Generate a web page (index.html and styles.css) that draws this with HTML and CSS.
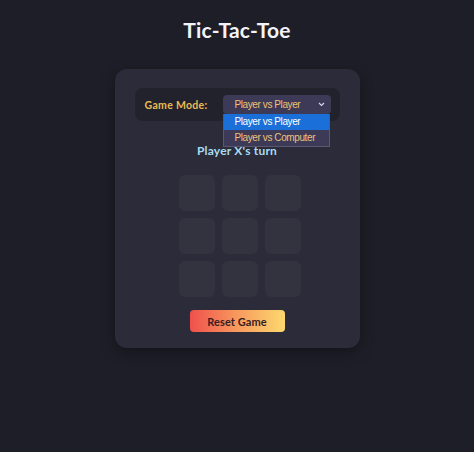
FILE: index.html
```html
<!DOCTYPE html>
<html lang="en">
<head>
<meta charset="utf-8">
<title>Tic-Tac-Toe</title>
<link rel="stylesheet" href="styles.css">
</head>
<body>
<h1 class="title">Tic-Tac-Toe</h1>
<main class="card">
  <div class="mode-box">
    <span class="mode-label">Game Mode:</span>
    <div class="select-wrap">
      <div class="select">
        <span>Player vs Player</span>
        <svg class="chev" width="7" height="5" viewBox="0 0 7 5"><polyline points="1,1 3.5,3.5 6,1" fill="none" stroke="#d8d4e8" stroke-width="1.2"/></svg>
      </div>
      <ul class="menu">
        <li class="opt opt-sel">Player vs Player</li>
        <li class="opt">Player vs Computer</li>
      </ul>
    </div>
  </div>
  <p class="status">Player X's turn</p>
  <div class="board">
    <div class="cell"></div><div class="cell"></div><div class="cell"></div>
    <div class="cell"></div><div class="cell"></div><div class="cell"></div>
    <div class="cell"></div><div class="cell"></div><div class="cell"></div>
  </div>
  <button class="reset">Reset Game</button>
</main>
</body>
</html>
```
FILE: styles.css
```css
html, body {
  margin: 0;
  padding: 0;
}
body {
  background: #1e1e28;
  font-family: Lato, "Open Sans", sans-serif;
  color: #fff;
  min-height: 452px;
}
.title {
  margin: 0;
  padding-top: 17px;
  font-size: 21px;
  line-height: 26px;
  font-weight: 700;
  text-align: center;
  color: #f4f4f8;
  letter-spacing: 0.2px;
}
.card {
  box-sizing: border-box;
  width: 245px;
  margin: 26px auto 0;
  padding: 19px 20px 16px;
  background: #2b2b39;
  border-radius: 12px;
  box-shadow: 0 4px 14px rgba(0, 0, 0, 0.35);
  display: flex;
  flex-direction: column;
  align-items: center;
}
.mode-box {
  box-sizing: border-box;
  width: 205px;
  height: 33px;
  padding: 0 10px;
  background: #22222c;
  border-radius: 8px;
  display: flex;
  align-items: center;
  gap: 16px;
}
.mode-label {
  font-size: 10.5px;
  font-weight: 700;
  letter-spacing: 0.3px;
  color: #e9bb55;
  white-space: nowrap;
}
.select-wrap {
  position: relative;
}
.select {
  box-sizing: border-box;
  width: 108px;
  height: 19px;
  padding: 0 6px 0 11px;
  background: #3c3a56;
  border-radius: 4px;
  display: flex;
  align-items: center;
  justify-content: space-between;
  font-family: "Liberation Sans", Arial, sans-serif;
  font-size: 10px;
  letter-spacing: -0.4px;
  color: #f1c272;
}
.chev {
  display: block;
}
.menu {
  position: absolute;
  top: 19px;
  left: 0;
  box-sizing: border-box;
  width: 107px;
  margin: 0;
  padding: 0;
  list-style: none;
  background: #3c3a56;
  border: 1px solid #5a5870;
  border-top: none;
  font-family: "Liberation Sans", Arial, sans-serif;
  font-size: 10px;
  letter-spacing: -0.4px;
}
.opt {
  height: 16px;
  line-height: 16px;
  padding-left: 10px;
  color: #eec27e;
}
.opt-sel {
  background: #1b6fd8;
  color: #ffffff;
}
.status {
  margin: 22px 0 0;
  font-size: 12px;
  line-height: 16px;
  font-weight: 700;
  letter-spacing: 0.2px;
  color: #a8dcf2;
}
.board {
  margin-top: 16px;
  padding-left: 5px;
  display: grid;
  grid-template-columns: repeat(3, 36px);
  grid-auto-rows: 36px;
  gap: 7px;
}
.cell {
  background: #33333f;
  border-radius: 6px;
}
.reset {
  margin-top: 13px;
  width: 95px;
  height: 22px;
  border: none;
  border-radius: 4px;
  background: linear-gradient(90deg, #f0504c 0%, #f79a5e 50%, #fdd96e 100%);
  color: #3a1d22;
  font-family: Lato, "Open Sans", sans-serif;
  font-size: 11px;
  font-weight: 700;
  letter-spacing: 0.1px;
  padding: 0;
}
```
